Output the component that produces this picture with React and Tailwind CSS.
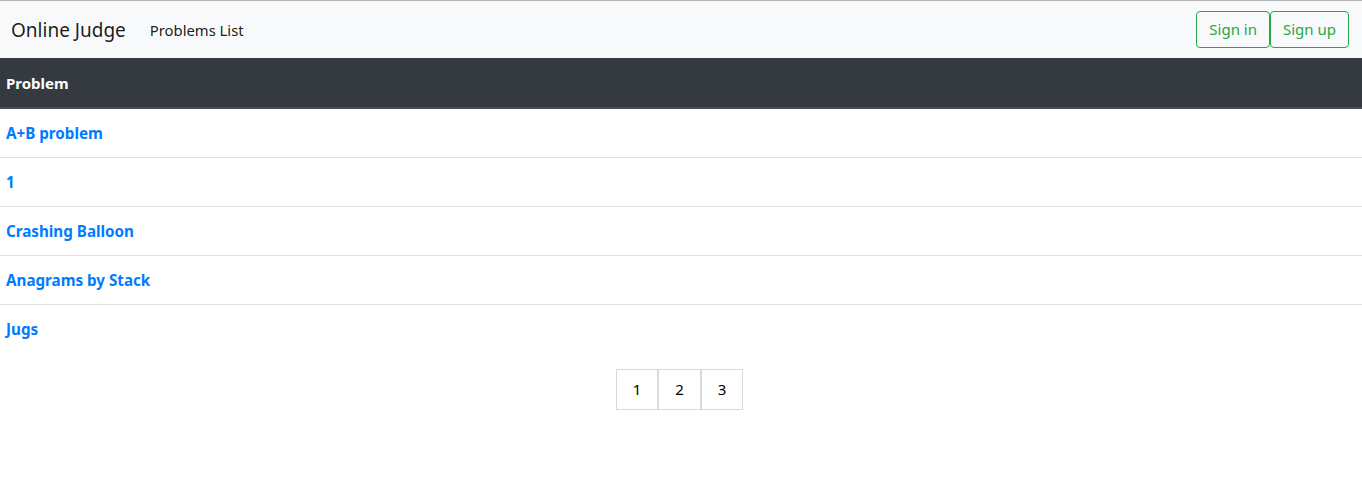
export default function App() {
  const problems = ['A+B problem', '1', 'Crashing Balloon', 'Anagrams by Stack', 'Jugs']
  const pages = [1, 2, 3]

  return (
    <div className="min-h-screen bg-white text-[#212529]" style={{ fontFamily: '"Noto Sans", "Open Sans", sans-serif' }}>
      <div className="border-t border-[#b3b3b3]" />
      <nav className="flex h-[57px] items-center justify-between bg-[#f8f9fa] pl-[11px] pr-[13px]">
        <div className="flex items-center">
          <span className="text-[19px] leading-[30px] text-[rgba(0,0,0,0.9)]">Online Judge</span>
          <a href="#" className="ml-[24px] text-[14.8px] leading-6 text-[rgba(0,0,0,0.9)]">Problems List</a>
        </div>
        <div className="flex">
          <button className="h-[37px] rounded border border-[#28a745] px-3 text-[15px] text-[#28a745]">Sign in</button>
          <button className="h-[37px] rounded border border-[#28a745] px-3 text-[15px] text-[#28a745]">Sign up</button>
        </div>
      </nav>
      <table className="w-full border-collapse">
        <thead>
          <tr className="bg-[#343a40]">
            <th className="h-[50px] border-b-2 border-[#454d55] px-[6px] pt-[1px] text-left text-[15px] font-bold text-white">Problem</th>
          </tr>
        </thead>
        <tbody>
          {problems.map((p, i) => (
            <tr key={p} className={i > 0 ? 'border-t border-[#dee2e6]' : ''}>
              <td className="h-[49px] px-[6px] pt-[2px] text-[15.2px] font-bold">
                <a href="#" className="text-[#007bff]">{p}</a>
              </td>
            </tr>
          ))}
        </tbody>
      </table>
      <div className="mt-[16px] flex justify-center pr-[3px]">
        {pages.map((n) => (
          <a
            key={n}
            href="#"
            className="flex h-[41px] w-[42.5px] items-center justify-center border border-[#d9d9d9] text-[15px] text-black"
          >
            {n}
          </a>
        ))}
      </div>
    </div>
  )
}
